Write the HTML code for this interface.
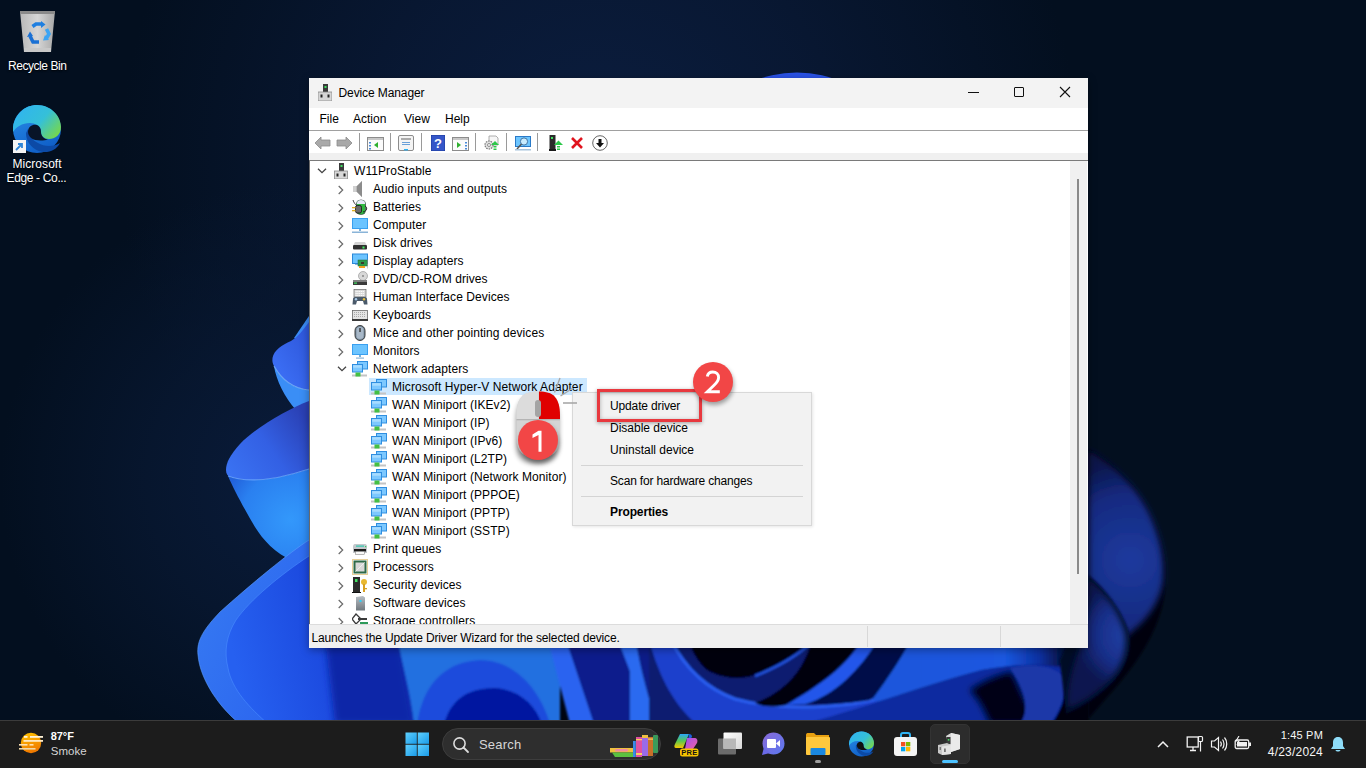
<!DOCTYPE html>
<html><head><meta charset="utf-8">
<style>
*{margin:0;padding:0;box-sizing:border-box}
html,body{width:1366px;height:768px;overflow:hidden}
body{position:relative;font-family:"Liberation Sans",sans-serif;font-size:12px;color:#000;background:#030f22}
.a{position:absolute}
.t{position:absolute;white-space:nowrap;line-height:1}
#wall{position:absolute;left:0;top:0}
</style></head>
<body>

<svg id="wall" width="1366" height="768" viewBox="0 0 1366 768">
<defs>
<radialGradient id="glA" cx="600" cy="160" r="480" gradientUnits="userSpaceOnUse">
<stop offset="0" stop-color="#0b1e40" stop-opacity="1"/><stop offset="0.45" stop-color="#0a1a38" stop-opacity="0.8"/><stop offset="1" stop-color="#0a1a38" stop-opacity="0"/></radialGradient>
<radialGradient id="glB" cx="300" cy="480" r="300" gradientUnits="userSpaceOnUse">
<stop offset="0" stop-color="#0a1c3c" stop-opacity="1"/><stop offset="0.5" stop-color="#081832" stop-opacity="0.8"/><stop offset="1" stop-color="#081832" stop-opacity="0"/></radialGradient>
<linearGradient id="gC" x1="200" y1="600" x2="330" y2="660" gradientUnits="userSpaceOnUse">
<stop offset="0" stop-color="#3578f2"/><stop offset="1" stop-color="#2a62ee"/></linearGradient>
<linearGradient id="gCi" x1="230" y1="640" x2="400" y2="600" gradientUnits="userSpaceOnUse">
<stop offset="0" stop-color="#2660f0"/><stop offset="0.6" stop-color="#1a46dc"/><stop offset="1" stop-color="#0c2ab0"/></linearGradient>
<linearGradient id="gBf" x1="230" y1="475" x2="309" y2="420" gradientUnits="userSpaceOnUse">
<stop offset="0" stop-color="#3a72f2"/><stop offset="0.5" stop-color="#3360e4"/><stop offset="1" stop-color="#2a40b4"/></linearGradient>
<radialGradient id="gBc" cx="290" cy="520" r="70" gradientUnits="userSpaceOnUse">
<stop offset="0" stop-color="#3398fb"/><stop offset="0.7" stop-color="#2a80f0"/><stop offset="1" stop-color="#2262dc"/></radialGradient>
<linearGradient id="gAf" x1="275" y1="360" x2="309" y2="340" gradientUnits="userSpaceOnUse">
<stop offset="0" stop-color="#3a6cf2"/><stop offset="1" stop-color="#2f58dc"/></linearGradient>
<radialGradient id="gR" cx="1130" cy="560" r="100" gradientUnits="userSpaceOnUse">
<stop offset="0" stop-color="#1d3a9e"/><stop offset="0.65" stop-color="#152a80"/><stop offset="1" stop-color="#0a164a"/></radialGradient>
<radialGradient id="gRi" cx="1130" cy="635" r="55" gradientUnits="userSpaceOnUse"><stop offset="0" stop-color="#2242a8"/><stop offset="0.6" stop-color="#182e88"/><stop offset="1" stop-color="#0c1850"/></radialGradient>
<linearGradient id="gBR" x1="900" y1="0" x2="1075" y2="0" gradientUnits="userSpaceOnUse"><stop offset="0" stop-color="#1a56dc"/><stop offset="0.6" stop-color="#1a58e0"/><stop offset="0.8" stop-color="#0c30a0"/><stop offset="1" stop-color="#01040f"/></linearGradient>
<filter id="bl1" x="-10%" y="-10%" width="120%" height="120%"><feGaussianBlur stdDeviation="1"/></filter>
<filter id="bl3" x="-20%" y="-20%" width="140%" height="140%"><feGaussianBlur stdDeviation="3"/></filter>
</defs>
<rect width="1366" height="768" fill="#030f1f"/><rect width="1366" height="768" fill="url(#glA)"/><rect width="1366" height="768" fill="url(#glB)"/>
<!-- top arc -->
<ellipse cx="797" cy="107" rx="65" ry="34.4" fill="#2a52e6"/>
<!-- petal A -->
<path d="M309,316 L294,338 L309,346 Z" fill="#3a8af5"/>
<path d="M274,366 C276,380 285,398 296,410 C301,416 305,422 309,429 L309,390 C298,389 284,384 274,366 Z" fill="#3a8ef6"/>
<path d="M309,322 C303,330 298,337 291,341 C282,345 274,350 272.5,358 C272,362 273,364 274,366 C284,384 298,389 309,390 Z" fill="url(#gAf)"/>
<path d="M274,366 C284,384 298,389 309,390" fill="none" stroke="#7cb8ff" stroke-width="1.2" opacity="0.8"/>
<!-- petal B -->
<path d="M228,476 C234,490 245,510 255,527 C263,540 275,553 293,561 L309,561 L309,469 C282,478 250,484 230,477 Z" fill="url(#gBc)"/>
<path d="M309,401 C290,408 255,428 240,444 C230,455 226,463 226,470 C226,474 228,476 230,477 C250,484 282,478 309,469 Z" fill="url(#gBf)"/>
<path d="M228,476 C250,484 282,478 309,469" fill="none" stroke="#6aa8ff" stroke-width="1.2" opacity="0.8"/>
<!-- strip base (clipped to x<=1088) -->
<rect x="300" y="600" width="788" height="124" fill="#000512"/>
<!-- petal C -->
<path d="M309,540 C290,552 250,585 220,612 C205,628 196,640 198,655 C200,680 220,708 240,724 L420,724 L420,540 Z" fill="url(#gC)"/>
<path d="M309,556 C280,575 250,600 236,620 C226,636 224,652 228,668 C232,690 250,708 268,724 L420,724 L420,556 Z" fill="url(#gCi)"/>
<path d="M309,556 C280,575 250,600 236,620 C226,636 224,652 228,668 C232,690 250,708 268,724" fill="none" stroke="#4a8cff" stroke-width="1" opacity="0.6"/>
<path d="M309,540 C290,552 250,585 220,612 C205,628 196,640 198,655 C200,680 220,708 240,724" fill="none" stroke="#5a9cff" stroke-width="1" opacity="0.6"/>
<g filter="url(#bl1)">
<!-- dark blue 335-400 -->
<path d="M325,640 L400,640 L414,724 L335,724 Z" fill="#0a26a8" filter="url(#bl3)"/>
<!-- teal-ish light band -->
<path d="M398,640 L560,640 L560,724 L414,724 C410,690 402,665 398,640 Z" fill="#2470e0"/>
<!-- arcs -->
<path d="M417,724 C422,690 440,662 480,660 C515,660 540,690 550,724 Z" fill="#1d4cdc"/>
<path d="M444,724 C450,702 465,688 495,688 C520,690 535,705 542,724 Z" fill="#0614a0"/>
<!-- vertical-ish bands -->
<path d="M548,640 L570,640 L596,724 L570,724 Z" fill="#2a64f0"/>
<path d="M566,640 L622,640 L660,724 L594,724 Z" fill="#0a1c8c"/>
<path d="M618,640 L636,640 C640,670 650,700 656,724 L650,724 Z" fill="#2a68f0"/>
<path d="M630,640 L636,640 C640,670 650,700 656,724 L630,724 Z" fill="#2a6af0"/>
<path d="M636,640 L649,640 C655,670 672,700 696,724 L656,724 C650,700 640,670 636,640 Z" fill="#0c1e88"/>
<!-- region above B1 -->
<path d="M649,640 L1088,640 L1088,724 L649,724 Z" fill="#0a1a70"/>
<!-- B1 -->
<path d="M649,640 L671,640 C685,668 705,688 735,699 C760,706 800,710 852,704 L900,695 C870,705 840,714 806,724 L696,724 C675,705 660,680 649,640 Z" fill="#1c40cc"/>
<path d="M671,640 C685,668 705,688 735,699 C760,706 800,710 852,704 L900,695" fill="none" stroke="#2a5ef0" stroke-width="3"/>
<!-- K1 black -->
<path d="M689,640 L812,640 C800,652 780,665 760,673 C745,680 725,680 707,670 C698,662 692,652 689,640 Z" fill="#000208"/>
<path d="M755,676 C775,668 795,658 812,642" fill="none" stroke="#2452e0" stroke-width="2.5"/>
<!-- K2 -->
<path d="M812,640 L862,640 C850,660 830,680 786,705 C770,708 760,706 755,703 C790,690 805,665 812,640 Z" fill="#000510"/>
<!-- B5 -->
<path d="M862,640 L878,640 C860,670 835,695 806,704 L786,705 C830,680 850,660 862,640 Z" fill="#2456ea"/>
<!-- N1 -->
<path d="M878,640 L911,640 C900,660 890,675 880,690 L870,700 C850,703 830,705 806,704 C835,695 860,670 878,640 Z" fill="#000a48"/>
<!-- bright region -->
<path d="M911,640 L1088,640 L1088,668 C1040,662 1010,665 982,670 C950,678 915,690 880,701 L872,700 C890,675 900,660 911,640 Z" fill="url(#gBR)"/>
<!-- below diagonal -->
<path d="M806,724 C840,714 870,705 880,701 C915,690 950,678 982,670 C1010,665 1040,662 1062,668 L1088,668 L1088,724 Z" fill="#082aa0"/>
<path d="M970,690 C985,680 1000,674 1012,672 C1020,690 1030,710 1036,724 L990,724 C985,710 978,698 970,690 Z" fill="#000618" filter="url(#bl3)"/>
<!-- petal near 1000-1066 -->
<path d="M1010,668 C1035,663 1055,666 1064,677 C1068,690 1062,706 1050,724 L1020,724 C1030,710 1025,690 1010,668 Z" fill="#1a38a8"/>
<path d="M1062,668 L1088,664 L1088,724 L1052,724 C1064,705 1068,690 1064,676 Z" fill="#01040f"/>
</g>
<!-- right petal -->
<path d="M1088,449 C1110,460 1140,486 1153,518 C1163,540 1167,560 1166,580 C1165,605 1157,630 1139,657 C1124,680 1104,700 1084,724 L1088,724 Z" fill="#01040f" filter="url(#bl1)"/>
<path d="M1088,450 C1110,461 1139,487 1152,519 C1161,541 1165,561 1163,582 C1160,600 1150,616 1134,630 C1120,642 1104,652 1088,660 Z" fill="url(#gR)" filter="url(#bl3)"/>
<path d="M1088,575 C1105,589 1120,607 1128,629 C1133,646 1128,666 1112,683 C1100,695 1085,706 1066,714 L1060,660 L1088,600 Z" fill="#050a28" filter="url(#bl1)"/>
<path d="M1088,578 C1104,592 1117,608 1124,630 C1128,646 1124,664 1110,680 C1098,692 1084,702 1068,708 C1066,690 1072,668 1080,648 L1088,600 Z" fill="url(#gRi)" filter="url(#bl3)"/>
</svg>
<svg class="a" style="left:18px;top:8px" width="40" height="46" viewBox="0 0 40 46">
<defs><linearGradient id="rb" x1="0" y1="0" x2="1" y2="0"><stop offset="0" stop-color="#b8b8b8"/><stop offset="0.5" stop-color="#d6d6d6"/><stop offset="1" stop-color="#a8a8a8"/></linearGradient></defs>
<path d="M2,3 L37,3 L33,44 L6,44 Z" fill="url(#rb)"/>
<path d="M2,3 L37,3 L37,6 L2,6 Z" fill="#8a8a8a"/>
<path d="M6,40 L33,40 L33,44 L6,44 Z" fill="#c8c8c8"/>
<g stroke-linecap="butt" fill="none" stroke-width="3.6" transform="translate(1,4)">
<path d="M13.5,14.5 L17,12 L23,12" stroke="#1f7fe0"/>
<path d="M22,9 L26.5,12.5 L22,16 Z" fill="#1f7fe0" stroke="none"/>
<path d="M27.5,17 L30,22 L27,27" stroke="#3aa4f4"/>
<path d="M30,28 L24,28.5 L26,23 Z" fill="#3aa4f4" stroke="none"/>
<path d="M20,30 L14,30 L11,24" stroke="#1a70d4"/>
<path d="M8,25 L11,19.5 L14,24 Z" fill="#1a70d4" stroke="none"/>
</g></svg>
<div class="t" style="left:8px;top:59.64px;font-size:12px;color:#fff;font-weight:normal;text-shadow:0 1px 2px #000;letter-spacing:-0.45px">Recycle Bin</div>
<svg class="a" style="left:13px;top:104px" width="50" height="50" viewBox="0 0 50 50">
<defs>
<linearGradient id="eg1" x1="0" y1="0.2" x2="1" y2="0.8"><stop offset="0" stop-color="#30b4f0"/><stop offset="0.55" stop-color="#35c0d8"/><stop offset="1" stop-color="#78d848"/></linearGradient>
<linearGradient id="eg2" x1="0" y1="0" x2="0.5" y2="1"><stop offset="0" stop-color="#2a90ea"/><stop offset="1" stop-color="#1060c8"/></linearGradient>
</defs>
<circle cx="24" cy="25" r="24" fill="url(#eg2)"/>
<path d="M13,29 C13,41 24,49 34,48 C41,47 45,43 47,39 C41,43 31,43 25,39 C19,36 15,31 15,25 Z" fill="#0c4aa6"/>
<path d="M0,23 C2,10 12,1 24,1 C38,1 48,12 48,23 C48,31 42,35 36,35 C31,35 28,32 28,28 L28,26 C27,22 22,19 17,19 C9,19 3,23 0,28 Z" fill="url(#eg1)"/>
<path d="M15,28 C15,22 20,20 24,21 C28,23 28,27 28,28 C28,32 31,35 35,35.5 C30,37 22,37 18,34 C16,32 15,30 15,28 Z" fill="#081428"/>
<rect x="0" y="36" width="13" height="13" fill="#f4f4f4"/>
<path d="M3,46 L9,40 M5,40 L9,40 L9,44" stroke="#2f86d8" stroke-width="1.8" fill="none"/>
</svg>
<div class="t" style="left:12.5px;top:158.04px;font-size:12px;color:#fff;font-weight:normal;text-shadow:0 1px 2px #000;letter-spacing:0.05px">Microsoft</div>
<div class="t" style="left:6.5px;top:172.14px;font-size:12px;color:#fff;font-weight:normal;text-shadow:0 1px 2px #000;letter-spacing:-0.35px">Edge - Co...</div>
<div class="a" style="left:309px;top:78px;width:779px;height:570px;background:#fff;box-shadow:0 2px 8px rgba(0,0,0,.35)"></div>
<div class="a" style="left:309px;top:78px;width:779px;height:30px;background:#f3f3f3"></div>
<svg class="a" style="left:318px;top:84px" width="14" height="17" viewBox="0 0 14 17">
<rect x="5" y="0" width="5" height="8" fill="#3a3a3a"/><rect x="6.5" y="2" width="2" height="2" fill="#3fe060"/>
<rect x="0" y="8" width="14" height="9" fill="#d6d6d6" stroke="#8a8a8a" stroke-width="0.8"/>
<rect x="2.5" y="10.5" width="2" height="3" fill="#222"/><rect x="9.5" y="10.5" width="2" height="3" fill="#222"/></svg>
<div class="t" style="left:338.5px;top:86.84px;font-size:12px;color:#000;font-weight:normal;letter-spacing:-0.1px">Device Manager</div>
<div class="a" style="left:968px;top:92px;width:11px;height:1px;background:#111"></div>
<div class="a" style="left:1014px;top:87px;width:10px;height:10px;border:1px solid #111;border-radius:1px"></div>
<svg class="a" style="left:1059px;top:86px" width="12" height="12" viewBox="0 0 12 12"><path d="M1,1 L11,11 M11,1 L1,11" stroke="#111" stroke-width="1.1"/></svg>
<div class="a" style="left:309px;top:108px;width:779px;height:22px;background:#fff"></div>
<div class="a" style="left:309px;top:130px;width:779px;height:1px;background:#a0a0a0"></div>
<div class="t" style="left:319.5px;top:112.84px;font-size:12px;color:#000;font-weight:normal;">File</div>
<div class="t" style="left:353px;top:112.84px;font-size:12px;color:#000;font-weight:normal;">Action</div>
<div class="t" style="left:404px;top:112.84px;font-size:12px;color:#000;font-weight:normal;">View</div>
<div class="t" style="left:445px;top:112.84px;font-size:12px;color:#000;font-weight:normal;">Help</div>
<div class="a" style="left:309px;top:131px;width:779px;height:22px;background:#fff"></div>
<div class="a" style="left:309px;top:153px;width:779px;height:7px;background:#f0f0f0"></div>
<div class="a" style="left:309px;top:160px;width:779px;height:1px;background:#7a7a7a"></div>
<div class="a" style="left:359px;top:133px;width:1px;height:18px;background:#9a9a9a"></div>
<div class="a" style="left:390px;top:133px;width:1px;height:18px;background:#9a9a9a"></div>
<div class="a" style="left:421px;top:133px;width:1px;height:18px;background:#9a9a9a"></div>
<div class="a" style="left:475px;top:133px;width:1px;height:18px;background:#9a9a9a"></div>
<div class="a" style="left:506px;top:133px;width:1px;height:18px;background:#9a9a9a"></div>
<div class="a" style="left:537px;top:133px;width:1px;height:18px;background:#9a9a9a"></div>
<svg class="a" style="left:314px;top:136px" width="17" height="14" viewBox="0 0 17 14"><path d="M1,7 L7,1 L7,4 L16,4 L16,10 L7,10 L7,13 Z" fill="#a9a9a9" stroke="#8a8a8a" stroke-width="0.8"/></svg>
<svg class="a" style="left:336px;top:136px" width="17" height="14" viewBox="0 0 17 14"><path d="M16,7 L10,1 L10,4 L1,4 L1,10 L10,10 L10,13 Z" fill="#a9a9a9" stroke="#8a8a8a" stroke-width="0.8"/></svg>
<svg class="a" style="left:367px;top:137px" width="17" height="14" viewBox="0 0 17 14"><rect x="0.5" y="0.5" width="16" height="13" fill="#fbfbfb" stroke="#8c8c8c"/><rect x="1" y="1" width="15" height="2" fill="#c8c8c8"/><path d="M11,5 L11,11 L7,8 Z" fill="#2fb02f"/><rect x="2" y="5" width="2" height="1.5" fill="#4a8ad8"/><rect x="2" y="8" width="2" height="1.5" fill="#4a8ad8"/><rect x="2" y="11" width="2" height="1.5" fill="#4a8ad8"/></svg>
<svg class="a" style="left:398px;top:135px" width="16" height="16" viewBox="0 0 16 16"><rect x="0.5" y="0.5" width="15" height="15" rx="1.5" fill="#f4f4f4" stroke="#8c8c8c"/><rect x="3" y="3" width="10" height="2" fill="#aaa"/><rect x="4" y="7" width="8" height="1" fill="#6aa0d8"/><rect x="4" y="9" width="8" height="1" fill="#6aa0d8"/><rect x="6" y="14" width="4" height="1.5" fill="#30b0f0"/></svg>
<svg class="a" style="left:431px;top:135px" width="14" height="16" viewBox="0 0 14 16"><rect x="0" y="0" width="14" height="16" fill="#3556c8"/><rect x="0" y="0" width="14" height="16" fill="none" stroke="#1d3a9a"/><text x="7" y="13" font-size="13" font-family="Liberation Sans" font-weight="bold" fill="#fff" text-anchor="middle">?</text></svg>
<svg class="a" style="left:452px;top:137px" width="17" height="14" viewBox="0 0 17 14"><rect x="0.5" y="0.5" width="16" height="13" fill="#fbfbfb" stroke="#8c8c8c"/><rect x="1" y="1" width="15" height="2" fill="#c8c8c8"/><path d="M5,5 L5,11 L9,8 Z" fill="#2fb02f"/><rect x="13" y="5" width="2" height="1.5" fill="#4a8ad8"/><rect x="13" y="8" width="2" height="1.5" fill="#4a8ad8"/><rect x="13" y="11" width="2" height="1.5" fill="#4a8ad8"/></svg>
<svg class="a" style="left:484px;top:135px" width="16" height="16" viewBox="0 0 16 16"><path d="M5,1 L12,1 L14,3 L14,10 L5,10 Z" fill="#f6f6f6" stroke="#9a9a9a" stroke-width="0.8"/><circle cx="5" cy="10" r="4" fill="#e0e0e0" stroke="#777" stroke-width="1.2" stroke-dasharray="1.5 1"/><circle cx="5" cy="10" r="1.5" fill="#fff" stroke="#777" stroke-width="0.8"/><path d="M7,10 L11,6 L15,10 Z" fill="#2cc84a"/><rect x="9.5" y="11" width="3" height="1.5" fill="#2cc84a"/><rect x="9.5" y="13.5" width="3" height="1.5" fill="#2cc84a"/></svg>
<svg class="a" style="left:515px;top:136px" width="16" height="15" viewBox="0 0 16 15"><rect x="0.5" y="0.5" width="15" height="10" fill="#6ec6ff" stroke="#2a7ac8"/><circle cx="9" cy="5.5" r="3.6" fill="#c8ecff" stroke="#3a6a98" stroke-width="0.9"/><path d="M6.5,8 L2,13" stroke="#555" stroke-width="1.5"/><rect x="0" y="13" width="16" height="1.5" fill="#a8c4dc"/></svg>
<svg class="a" style="left:549px;top:135px" width="14" height="16" viewBox="0 0 14 16"><rect x="0.5" y="0" width="6" height="15" fill="#2a2a2a"/><rect x="2" y="2" width="2" height="2" fill="#3fe060"/><rect x="0" y="14" width="7" height="2" fill="#1a1a1a"/><path d="M5,10 L9.5,5.5 L14,10 Z" fill="#2cc84a"/><rect x="8" y="11" width="3" height="1.5" fill="#2cc84a"/><rect x="8" y="13.5" width="3" height="1.5" fill="#2cc84a"/></svg>
<svg class="a" style="left:570px;top:136px" width="14" height="14" viewBox="0 0 14 14"><path d="M2,2 L12,12 M12,2 L2,12" stroke="#e0141e" stroke-width="2.6"/></svg>
<svg class="a" style="left:592px;top:135px" width="16" height="16" viewBox="0 0 16 16"><circle cx="8" cy="8" r="7.3" fill="#fff" stroke="#555" stroke-width="0.9"/><path d="M8,12.5 L4,8 L6.5,8 L6.5,4 L9.5,4 L9.5,8 L12,8 Z" fill="#111"/></svg>
<div class="a" style="left:309px;top:161px;width:1px;height:463px;background:#6a6a6a"></div>
<div class="a" style="left:1070px;top:161px;width:17px;height:463px;background:#f0f0f0"></div>
<div class="a" style="left:1077px;top:179px;width:2px;height:395px;background:#8a8a8a"></div>
<div class="a" style="left:309px;top:624px;width:779px;height:24px;background:#f0f0f0;border-top:1px solid #dcdcdc"></div>
<div class="a" style="left:867px;top:626px;width:1px;height:21px;background:#d8d8d8"></div>
<div class="a" style="left:1000px;top:626px;width:1px;height:21px;background:#d8d8d8"></div>
<div class="t" style="left:311.5px;top:632.04px;font-size:12px;color:#000;font-weight:normal;letter-spacing:-0.15px">Launches the Update Driver Wizard for the selected device.</div>
<div class="a" style="left:310px;top:161px;width:760px;height:463px;overflow:hidden">
<svg class="a" style="left:7px;top:7px" width="10" height="6" viewBox="0 0 10 6"><path d="M1,0.7 L5,4.7 L9,0.7" fill="none" stroke="#444" stroke-width="1.3"/></svg>
<svg class="a" style="left:24px;top:2px" width="16" height="16" viewBox="0 0 16 16"><rect x="5" y="0" width="5" height="8" fill="#3a3a3a"/><rect x="6.5" y="2" width="2" height="2" fill="#3fe060"/><rect x="0.5" y="8" width="13" height="8" fill="#d8d8d8" stroke="#8a8a8a" stroke-width="0.8"/><rect x="2.5" y="10.5" width="2" height="3" fill="#222"/><rect x="9.5" y="10.5" width="2" height="3" fill="#222"/></svg>
<div class="t" style="left:44px;top:3.84px;font-size:12px;color:#000;letter-spacing:0.08px">W11ProStable</div>
<svg class="a" style="left:28px;top:24px" width="6" height="10" viewBox="0 0 6 10"><path d="M0.7,1 L4.7,5 L0.7,9" fill="none" stroke="#6a6a6a" stroke-width="1.2"/></svg>
<svg class="a" style="left:42px;top:20px" width="16" height="16" viewBox="0 0 16 16"><path d="M1,5 L5,5 L10,0 L10,16 L5,11 L1,11 Z" fill="#b8b8b8"/><path d="M5,5 L10,0 L10,16 L5,11 Z" fill="#8c8c8c"/><rect x="1" y="5" width="3" height="6" fill="#d0d0d0"/></svg>
<div class="t" style="left:63px;top:21.84px;font-size:12px;color:#000;letter-spacing:0.08px">Audio inputs and outputs</div>
<svg class="a" style="left:28px;top:42px" width="6" height="10" viewBox="0 0 6 10"><path d="M0.7,1 L4.7,5 L0.7,9" fill="none" stroke="#6a6a6a" stroke-width="1.2"/></svg>
<svg class="a" style="left:42px;top:38px" width="16" height="16" viewBox="0 0 16 16"><rect x="4.5" y="1" width="9" height="14.5" rx="4" fill="#30b840" stroke="#2a2a3a" stroke-width="0.6"/><path d="M5,5 L13,5 L13,4 C13,1.8 11,1 9,1 C7,1 5,1.8 5,4 Z" fill="#e8e8f8"/><path d="M1,1 C2,4 3,5 5,7" stroke="#333" fill="none" stroke-width="0.9"/><path d="M13,7 C15.5,8 15.5,12 11,13" stroke="#222" fill="none" stroke-width="1"/><rect x="3.5" y="6.5" width="6" height="7.5" rx="1.8" fill="#6a6a6a" stroke="#111" stroke-width="0.8"/><rect x="0" y="8" width="3.5" height="1.3" fill="#e0b020"/><rect x="0" y="11" width="3.5" height="1.3" fill="#e0b020"/></svg>
<div class="t" style="left:63px;top:39.84px;font-size:12px;color:#000;letter-spacing:0.08px">Batteries</div>
<svg class="a" style="left:28px;top:60px" width="6" height="10" viewBox="0 0 6 10"><path d="M0.7,1 L4.7,5 L0.7,9" fill="none" stroke="#6a6a6a" stroke-width="1.2"/></svg>
<svg class="a" style="left:42px;top:56px" width="16" height="16" viewBox="0 0 16 16"><rect x="0" y="1" width="16" height="11" fill="#3aa0f0"/><rect x="1" y="2" width="14" height="9" fill="#6cc4ff"/><rect x="7" y="12" width="2" height="2" fill="#7ab0d8"/><rect x="0" y="14.5" width="16" height="1.5" fill="#8ab4d8"/></svg>
<div class="t" style="left:63px;top:57.84px;font-size:12px;color:#000;letter-spacing:0.08px">Computer</div>
<svg class="a" style="left:28px;top:78px" width="6" height="10" viewBox="0 0 6 10"><path d="M0.7,1 L4.7,5 L0.7,9" fill="none" stroke="#6a6a6a" stroke-width="1.2"/></svg>
<svg class="a" style="left:42px;top:74px" width="16" height="16" viewBox="0 0 16 16"><path d="M1.5,10 L3,7 L13,7 L14.5,10 Z" fill="#d4d4d4"/><rect x="1" y="10" width="14" height="4.5" rx="1" fill="#303030"/><rect x="10.5" y="11.5" width="2" height="2" fill="#40f060"/></svg>
<div class="t" style="left:63px;top:75.84px;font-size:12px;color:#000;letter-spacing:0.08px">Disk drives</div>
<svg class="a" style="left:28px;top:96px" width="6" height="10" viewBox="0 0 6 10"><path d="M0.7,1 L4.7,5 L0.7,9" fill="none" stroke="#6a6a6a" stroke-width="1.2"/></svg>
<svg class="a" style="left:42px;top:92px" width="16" height="16" viewBox="0 0 16 16"><rect x="0" y="0.5" width="16" height="10.5" fill="#2a88d8"/><rect x="1" y="1.5" width="14" height="8.5" fill="#6cc4ff"/><rect x="3" y="11" width="5" height="1" fill="#8ab4d8"/><rect x="6" y="7" width="9.5" height="6" fill="#2e9a4a" stroke="#1e6a3a" stroke-width="0.5"/><rect x="9" y="9" width="3" height="2" fill="#3a3a2a"/><rect x="7" y="13" width="6" height="2" fill="#f0a020"/><rect x="15.5" y="6.5" width="0.8" height="9" fill="#999"/></svg>
<div class="t" style="left:63px;top:93.84px;font-size:12px;color:#000;letter-spacing:0.08px">Display adapters</div>
<svg class="a" style="left:28px;top:114px" width="6" height="10" viewBox="0 0 6 10"><path d="M0.7,1 L4.7,5 L0.7,9" fill="none" stroke="#6a6a6a" stroke-width="1.2"/></svg>
<svg class="a" style="left:42px;top:110px" width="16" height="16" viewBox="0 0 16 16"><circle cx="11" cy="5" r="4.5" fill="#d8d8d8" stroke="#9a9a9a" stroke-width="0.7"/><circle cx="11" cy="5" r="1" fill="#888"/><rect x="1" y="9" width="14" height="5" fill="#3a3a3a"/><rect x="1" y="9" width="14" height="2" fill="#808080"/><rect x="2" y="11.5" width="3" height="1.2" fill="#40e060"/></svg>
<div class="t" style="left:63px;top:111.84px;font-size:12px;color:#000;letter-spacing:0.08px">DVD/CD-ROM drives</div>
<svg class="a" style="left:28px;top:132px" width="6" height="10" viewBox="0 0 6 10"><path d="M0.7,1 L4.7,5 L0.7,9" fill="none" stroke="#6a6a6a" stroke-width="1.2"/></svg>
<svg class="a" style="left:42px;top:128px" width="16" height="16" viewBox="0 0 16 16"><rect x="2" y="0.5" width="12" height="7.5" fill="#d8d8d8" stroke="#6a6a6a" stroke-width="0.7"/><path d="M3.5,2.5 H12.5 M3.5,4.5 H12.5 M3.5,6.5 H12.5" stroke="#fff" stroke-width="0.9" stroke-dasharray="1.2 0.6"/><path d="M0.5,15.5 L1,10 C1,8.5 2,8 4,8 L12,8 C14,8 15,8.5 15,10 L15.5,15.5 L12,15.5 L11,12 L5,12 L4,15.5 Z" fill="#4a5a6a"/><circle cx="4" cy="10.3" r="1.2" fill="#a8c8e8"/><circle cx="12" cy="10.3" r="1.2" fill="#e8c040"/></svg>
<div class="t" style="left:63px;top:129.84px;font-size:12px;color:#000;letter-spacing:0.08px">Human Interface Devices</div>
<svg class="a" style="left:28px;top:150px" width="6" height="10" viewBox="0 0 6 10"><path d="M0.7,1 L4.7,5 L0.7,9" fill="none" stroke="#6a6a6a" stroke-width="1.2"/></svg>
<svg class="a" style="left:42px;top:146px" width="16" height="16" viewBox="0 0 16 16"><rect x="0.5" y="3.5" width="15" height="9" fill="#e4e4e4" stroke="#6a6a6a" stroke-width="0.8"/><path d="M2,5.5 H14 M2,7.5 H14 M2,9.5 H14" stroke="#9a9a9a" stroke-width="0.8" stroke-dasharray="1 1"/><rect x="0" y="12" width="16" height="2" fill="#3a3a3a"/></svg>
<div class="t" style="left:63px;top:147.84px;font-size:12px;color:#000;letter-spacing:0.08px">Keyboards</div>
<svg class="a" style="left:28px;top:168px" width="6" height="10" viewBox="0 0 6 10"><path d="M0.7,1 L4.7,5 L0.7,9" fill="none" stroke="#6a6a6a" stroke-width="1.2"/></svg>
<svg class="a" style="left:42px;top:164px" width="16" height="16" viewBox="0 0 16 16"><rect x="3" y="0.5" width="10" height="15" rx="5" fill="#7a8ea0" stroke="#2a2a2a" stroke-width="0.9"/><rect x="4.5" y="2" width="7" height="12" rx="3.5" fill="#a8b8c8"/><rect x="7.3" y="3" width="1.4" height="4" fill="#333"/></svg>
<div class="t" style="left:63px;top:165.84px;font-size:12px;color:#000;letter-spacing:0.08px">Mice and other pointing devices</div>
<svg class="a" style="left:28px;top:186px" width="6" height="10" viewBox="0 0 6 10"><path d="M0.7,1 L4.7,5 L0.7,9" fill="none" stroke="#6a6a6a" stroke-width="1.2"/></svg>
<svg class="a" style="left:42px;top:182px" width="16" height="16" viewBox="0 0 16 16"><rect x="0" y="1" width="16" height="11" fill="#3aa0f0"/><rect x="1" y="2" width="14" height="9" fill="#6cc4ff"/><rect x="7" y="12" width="2" height="2" fill="#7ab0d8"/><rect x="4" y="14.5" width="8" height="1.2" fill="#8ab4d8"/></svg>
<div class="t" style="left:63px;top:183.84px;font-size:12px;color:#000;letter-spacing:0.08px">Monitors</div>
<svg class="a" style="left:27px;top:205px" width="10" height="6" viewBox="0 0 10 6"><path d="M1,0.7 L5,4.7 L9,0.7" fill="none" stroke="#444" stroke-width="1.3"/></svg>
<svg class="a" style="left:42px;top:200px" width="16" height="16" viewBox="0 0 16 16"><rect x="5.5" y="0.5" width="10" height="7.5" fill="#7cc8ff" stroke="#2f8ee0" stroke-width="1"/><rect x="0.5" y="3.5" width="10" height="7.5" fill="#7cc8ff" stroke="#2f8ee0" stroke-width="1"/><rect x="1.2" y="4.2" width="8.6" height="2.5" fill="#a8dcff"/><rect x="0" y="13.5" width="15" height="2" fill="#c4c4c4"/><rect x="3.5" y="11.5" width="5" height="4" fill="#44c044"/></svg>
<div class="t" style="left:63px;top:201.84px;font-size:12px;color:#000;letter-spacing:0.08px">Network adapters</div>
<div class="a" style="left:59px;top:217px;width:218px;height:17px;background:#cce8ff"></div>
<svg class="a" style="left:61px;top:218px" width="16" height="16" viewBox="0 0 16 16"><rect x="5.5" y="0.5" width="10" height="7.5" fill="#7cc8ff" stroke="#2f8ee0" stroke-width="1"/><rect x="0.5" y="3.5" width="10" height="7.5" fill="#7cc8ff" stroke="#2f8ee0" stroke-width="1"/><rect x="1.2" y="4.2" width="8.6" height="2.5" fill="#a8dcff"/><rect x="0" y="13.5" width="15" height="2" fill="#c4c4c4"/><rect x="3.5" y="11.5" width="5" height="4" fill="#44c044"/></svg>
<div class="t" style="left:82px;top:219.84px;font-size:12px;color:#000;letter-spacing:0.08px">Microsoft Hyper-V Network Adapter</div>
<svg class="a" style="left:61px;top:236px" width="16" height="16" viewBox="0 0 16 16"><rect x="5.5" y="0.5" width="10" height="7.5" fill="#7cc8ff" stroke="#2f8ee0" stroke-width="1"/><rect x="0.5" y="3.5" width="10" height="7.5" fill="#7cc8ff" stroke="#2f8ee0" stroke-width="1"/><rect x="1.2" y="4.2" width="8.6" height="2.5" fill="#a8dcff"/><rect x="0" y="13.5" width="15" height="2" fill="#c4c4c4"/><rect x="3.5" y="11.5" width="5" height="4" fill="#44c044"/></svg>
<div class="t" style="left:82px;top:237.84px;font-size:12px;color:#000;letter-spacing:0.08px">WAN Miniport (IKEv2)</div>
<svg class="a" style="left:61px;top:254px" width="16" height="16" viewBox="0 0 16 16"><rect x="5.5" y="0.5" width="10" height="7.5" fill="#7cc8ff" stroke="#2f8ee0" stroke-width="1"/><rect x="0.5" y="3.5" width="10" height="7.5" fill="#7cc8ff" stroke="#2f8ee0" stroke-width="1"/><rect x="1.2" y="4.2" width="8.6" height="2.5" fill="#a8dcff"/><rect x="0" y="13.5" width="15" height="2" fill="#c4c4c4"/><rect x="3.5" y="11.5" width="5" height="4" fill="#44c044"/></svg>
<div class="t" style="left:82px;top:255.84px;font-size:12px;color:#000;letter-spacing:0.08px">WAN Miniport (IP)</div>
<svg class="a" style="left:61px;top:272px" width="16" height="16" viewBox="0 0 16 16"><rect x="5.5" y="0.5" width="10" height="7.5" fill="#7cc8ff" stroke="#2f8ee0" stroke-width="1"/><rect x="0.5" y="3.5" width="10" height="7.5" fill="#7cc8ff" stroke="#2f8ee0" stroke-width="1"/><rect x="1.2" y="4.2" width="8.6" height="2.5" fill="#a8dcff"/><rect x="0" y="13.5" width="15" height="2" fill="#c4c4c4"/><rect x="3.5" y="11.5" width="5" height="4" fill="#44c044"/></svg>
<div class="t" style="left:82px;top:273.84px;font-size:12px;color:#000;letter-spacing:0.08px">WAN Miniport (IPv6)</div>
<svg class="a" style="left:61px;top:290px" width="16" height="16" viewBox="0 0 16 16"><rect x="5.5" y="0.5" width="10" height="7.5" fill="#7cc8ff" stroke="#2f8ee0" stroke-width="1"/><rect x="0.5" y="3.5" width="10" height="7.5" fill="#7cc8ff" stroke="#2f8ee0" stroke-width="1"/><rect x="1.2" y="4.2" width="8.6" height="2.5" fill="#a8dcff"/><rect x="0" y="13.5" width="15" height="2" fill="#c4c4c4"/><rect x="3.5" y="11.5" width="5" height="4" fill="#44c044"/></svg>
<div class="t" style="left:82px;top:291.84px;font-size:12px;color:#000;letter-spacing:0.08px">WAN Miniport (L2TP)</div>
<svg class="a" style="left:61px;top:308px" width="16" height="16" viewBox="0 0 16 16"><rect x="5.5" y="0.5" width="10" height="7.5" fill="#7cc8ff" stroke="#2f8ee0" stroke-width="1"/><rect x="0.5" y="3.5" width="10" height="7.5" fill="#7cc8ff" stroke="#2f8ee0" stroke-width="1"/><rect x="1.2" y="4.2" width="8.6" height="2.5" fill="#a8dcff"/><rect x="0" y="13.5" width="15" height="2" fill="#c4c4c4"/><rect x="3.5" y="11.5" width="5" height="4" fill="#44c044"/></svg>
<div class="t" style="left:82px;top:309.84px;font-size:12px;color:#000;letter-spacing:0.08px">WAN Miniport (Network Monitor)</div>
<svg class="a" style="left:61px;top:326px" width="16" height="16" viewBox="0 0 16 16"><rect x="5.5" y="0.5" width="10" height="7.5" fill="#7cc8ff" stroke="#2f8ee0" stroke-width="1"/><rect x="0.5" y="3.5" width="10" height="7.5" fill="#7cc8ff" stroke="#2f8ee0" stroke-width="1"/><rect x="1.2" y="4.2" width="8.6" height="2.5" fill="#a8dcff"/><rect x="0" y="13.5" width="15" height="2" fill="#c4c4c4"/><rect x="3.5" y="11.5" width="5" height="4" fill="#44c044"/></svg>
<div class="t" style="left:82px;top:327.84px;font-size:12px;color:#000;letter-spacing:0.08px">WAN Miniport (PPPOE)</div>
<svg class="a" style="left:61px;top:344px" width="16" height="16" viewBox="0 0 16 16"><rect x="5.5" y="0.5" width="10" height="7.5" fill="#7cc8ff" stroke="#2f8ee0" stroke-width="1"/><rect x="0.5" y="3.5" width="10" height="7.5" fill="#7cc8ff" stroke="#2f8ee0" stroke-width="1"/><rect x="1.2" y="4.2" width="8.6" height="2.5" fill="#a8dcff"/><rect x="0" y="13.5" width="15" height="2" fill="#c4c4c4"/><rect x="3.5" y="11.5" width="5" height="4" fill="#44c044"/></svg>
<div class="t" style="left:82px;top:345.84px;font-size:12px;color:#000;letter-spacing:0.08px">WAN Miniport (PPTP)</div>
<svg class="a" style="left:61px;top:362px" width="16" height="16" viewBox="0 0 16 16"><rect x="5.5" y="0.5" width="10" height="7.5" fill="#7cc8ff" stroke="#2f8ee0" stroke-width="1"/><rect x="0.5" y="3.5" width="10" height="7.5" fill="#7cc8ff" stroke="#2f8ee0" stroke-width="1"/><rect x="1.2" y="4.2" width="8.6" height="2.5" fill="#a8dcff"/><rect x="0" y="13.5" width="15" height="2" fill="#c4c4c4"/><rect x="3.5" y="11.5" width="5" height="4" fill="#44c044"/></svg>
<div class="t" style="left:82px;top:363.84px;font-size:12px;color:#000;letter-spacing:0.08px">WAN Miniport (SSTP)</div>
<svg class="a" style="left:28px;top:384px" width="6" height="10" viewBox="0 0 6 10"><path d="M0.7,1 L4.7,5 L0.7,9" fill="none" stroke="#6a6a6a" stroke-width="1.2"/></svg>
<svg class="a" style="left:42px;top:380px" width="16" height="16" viewBox="0 0 16 16"><path d="M1,6 C1,3.5 2,3 4,3 L12,3 C14,3 15,3.5 15,6 L15,12 L1,12 Z" fill="#c4c8cc"/><rect x="4" y="4.5" width="8" height="1.2" fill="#30c8b0"/><rect x="13" y="5" width="1.2" height="1.2" fill="#30d060"/><rect x="2" y="8" width="12" height="2.5" fill="#1a1a1a"/><rect x="3.5" y="10.5" width="9" height="3" fill="#f8f8f8" stroke="#777" stroke-width="0.5"/></svg>
<div class="t" style="left:63px;top:381.84px;font-size:12px;color:#000;letter-spacing:0.08px">Print queues</div>
<svg class="a" style="left:28px;top:402px" width="6" height="10" viewBox="0 0 6 10"><path d="M0.7,1 L4.7,5 L0.7,9" fill="none" stroke="#6a6a6a" stroke-width="1.2"/></svg>
<svg class="a" style="left:42px;top:398px" width="16" height="16" viewBox="0 0 16 16"><rect x="0.5" y="0.5" width="15" height="15" fill="none" stroke="#d0a030" stroke-width="1" stroke-dasharray="1 1"/><rect x="1.5" y="1.5" width="13" height="13" fill="#2e6a48"/><rect x="3.5" y="3.5" width="9" height="9" fill="#d8d8d8"/><path d="M3.5,12.5 L12.5,3.5" stroke="#eee" stroke-width="1"/></svg>
<div class="t" style="left:63px;top:399.84px;font-size:12px;color:#000;letter-spacing:0.08px">Processors</div>
<svg class="a" style="left:28px;top:420px" width="6" height="10" viewBox="0 0 6 10"><path d="M0.7,1 L4.7,5 L0.7,9" fill="none" stroke="#6a6a6a" stroke-width="1.2"/></svg>
<svg class="a" style="left:42px;top:416px" width="16" height="16" viewBox="0 0 16 16"><rect x="1" y="0" width="7" height="15" fill="#2a2a2a"/><rect x="3" y="2" width="2.5" height="3" fill="#40e060"/><rect x="0" y="15" width="9" height="1" fill="#111"/><circle cx="12" cy="5" r="3" fill="#e8b830"/><rect x="11" y="7" width="2" height="8" fill="#d8a020"/><rect x="13" y="11" width="2" height="1.3" fill="#d8a020"/></svg>
<div class="t" style="left:63px;top:417.84px;font-size:12px;color:#000;letter-spacing:0.08px">Security devices</div>
<svg class="a" style="left:28px;top:438px" width="6" height="10" viewBox="0 0 6 10"><path d="M0.7,1 L4.7,5 L0.7,9" fill="none" stroke="#6a6a6a" stroke-width="1.2"/></svg>
<svg class="a" style="left:42px;top:434px" width="16" height="16" viewBox="0 0 16 16"><defs><linearGradient id="sfg" x1="0" y1="0" x2="0" y2="1"><stop offset="0" stop-color="#b8bec4"/><stop offset="1" stop-color="#70787e"/></linearGradient></defs><path d="M4,2 L11,1 L13,2.5 L13,15.5 L4,15.5 Z" fill="url(#sfg)"/><rect x="7.5" y="5" width="2" height="2" fill="#30d0f8"/></svg>
<div class="t" style="left:63px;top:435.84px;font-size:12px;color:#000;letter-spacing:0.08px">Software devices</div>
<svg class="a" style="left:28px;top:456px" width="6" height="10" viewBox="0 0 6 10"><path d="M0.7,1 L4.7,5 L0.7,9" fill="none" stroke="#6a6a6a" stroke-width="1.2"/></svg>
<svg class="a" style="left:42px;top:452px" width="16" height="16" viewBox="0 0 16 16"><path d="M4,1 L9,6 L4,11 L0,6 Z" fill="none" stroke="#3a3a3a" stroke-width="1.3"/><rect x="6" y="5" width="9" height="2" fill="#3a3a3a"/><rect x="8" y="9" width="8" height="5" fill="#2e9a5a"/></svg>
<div class="t" style="left:63px;top:453.84px;font-size:12px;color:#000;letter-spacing:0.08px">Storage controllers</div>
</div>
<div class="a" style="left:572px;top:392px;width:240px;height:134px;background:#f2f2f2;border:1px solid #d8d8d8;box-shadow:1px 1px 3px rgba(0,0,0,.10)"></div>
<div class="a" style="left:581px;top:465px;width:222px;height:1px;background:#d4d4d4"></div>
<div class="a" style="left:581px;top:496px;width:222px;height:1px;background:#d4d4d4"></div>
<div class="t" style="left:610px;top:400.04px;font-size:12px;color:#000;font-weight:normal;letter-spacing:-0.14px">Update driver</div>
<div class="t" style="left:610px;top:421.94px;font-size:12px;color:#000;font-weight:normal;">Disable device</div>
<div class="t" style="left:610px;top:444.04px;font-size:12px;color:#000;font-weight:normal;">Uninstall device</div>
<div class="t" style="left:610px;top:475.44px;font-size:12px;color:#000;font-weight:normal;letter-spacing:-0.18px">Scan for hardware changes</div>
<div class="t" style="left:610px;top:506.44px;font-size:12px;color:#000;font-weight:bold;letter-spacing:-0.12px">Properties</div>
<div class="a" style="left:597px;top:389px;width:105px;height:33px;border:3px solid #e8383e;box-shadow:0 1px 4px rgba(0,0,0,.35), inset 0 1px 4px rgba(0,0,0,.30)"></div>
<div class="a" style="left:693px;top:362px;width:40px;height:40px;border-radius:50%;background:#f24646;box-shadow:1px 3px 4px rgba(0,0,0,.35)"></div>
<svg class="a" style="left:700px;top:366px" width="26" height="32" viewBox="0 0 26 32"><path d="M7.3,10.5 C7.8,7.5 10,6 12.8,6 C16.3,6 18.6,8.3 18.6,11.5 C18.6,14.3 17,16.5 13.8,19.5 L7.3,25.8 L19.8,25.8" fill="none" stroke="#fff" stroke-width="2.9" stroke-linejoin="miter"/></svg>
<svg class="a" style="left:510px;top:370px" width="70" height="100" viewBox="0 0 70 100">
<defs><filter id="msh" x="-30%" y="-30%" width="160%" height="160%"><feGaussianBlur stdDeviation="2.4"/></filter></defs>
<g transform="translate(0,18)">
<path d="M7,30 C7,10 14,4 28,4 C42,4 50,10 50,30 L50,52 C50,66 42,72 28,72 C14,72 7,66 7,52 Z" fill="#000" opacity="0.4" filter="url(#msh)" transform="translate(-1,4)"/>
<path d="M6.5,28 C6.5,9 13,3.5 28,3.5 C43,3.5 50,9 50,28 L50,50 C50,64 42,70 28,70 C14,70 6.5,64 6.5,50 Z" fill="#d4d4d4"/>
<path d="M6.5,28 C6.5,9 13,3.5 28,3.5 L28,31 L6.5,31 Z" fill="#dcdcdc"/>
<path d="M29,3.5 C43,3.5 50,9 50,28 L50,31 L29,31 Z" fill="#e00000"/>
<rect x="25" y="12" width="6" height="17" rx="3" fill="#a4a4a4"/>
<rect x="6.5" y="31" width="43.5" height="1.3" fill="#b4b4b4"/>
</g>
<path d="M50.5,26 L63,18" stroke="#a8a8a8" stroke-width="1.4"/>
<path d="M50,8 L44.5,22.5" stroke="#a8a8a8" stroke-width="1.4"/>
<path d="M53,33 L67,33" stroke="#a8a8a8" stroke-width="1.6"/>
</svg>
<div class="a" style="left:518px;top:420px;width:40px;height:40px;border-radius:50%;background:#f24646;box-shadow:1px 3px 4px rgba(0,0,0,.35)"></div>
<svg class="a" style="left:528px;top:428px" width="18" height="26" viewBox="0 0 18 26"><path d="M4.5,6.5 L10.5,2.8 L13.5,2.8 L13.5,23.7 L10.5,23.7 L10.5,7 L4.5,10 Z" fill="#fff"/></svg>
<div class="a" style="left:0px;top:720px;width:1366px;height:48px;background:#1c1c1c"></div>
<div class="a" style="left:0px;top:720px;width:1366px;height:1px;background:#3b3b3b"></div>
<svg class="a" style="left:14px;top:731px" width="36" height="26" viewBox="0 0 36 26">
<defs><linearGradient id="sun" x1="0" y1="0" x2="0.3" y2="1"><stop offset="0" stop-color="#ffc400"/><stop offset="1" stop-color="#f07a00"/></linearGradient></defs>
<circle cx="17" cy="12" r="10.2" fill="url(#sun)"/>
<rect x="16" y="5" width="13" height="1.8" fill="#fff3d8"/>
<rect x="10" y="5" width="3.5" height="1.8" fill="#fff3d8"/>
<rect x="9.5" y="9" width="19.5" height="1.8" fill="#ffe8c0"/>
<rect x="5" y="13" width="8.5" height="1.6" fill="#ffe0b0"/>
<rect x="15.5" y="13" width="4" height="1.6" fill="#ffe0b0"/>
<rect x="5" y="17" width="16.5" height="1.6" fill="#f0d8a8"/>
</svg>
<div class="t" style="left:50.8px;top:730.69px;font-size:11px;color:#fff;font-weight:bold;letter-spacing:-0.1px">87°F</div>
<div class="t" style="left:50.8px;top:746.07px;font-size:11.5px;color:#d4d4d4;font-weight:normal;letter-spacing:0px">Smoke</div>
<svg class="a" style="left:405px;top:732px" width="25" height="25" viewBox="0 0 25 25">
<defs><linearGradient id="wl" x1="0" y1="0" x2="1" y2="1"><stop offset="0" stop-color="#5fd0ff"/><stop offset="1" stop-color="#1a9be8"/></linearGradient></defs>
<rect x="0.5" y="0.5" width="11.3" height="11.3" fill="url(#wl)"/><rect x="12.7" y="0.5" width="11.3" height="11.3" fill="url(#wl)"/>
<rect x="0.5" y="12.7" width="11.3" height="11.3" fill="url(#wl)"/><rect x="12.7" y="12.7" width="11.3" height="11.3" fill="url(#wl)"/></svg>
<div class="a" style="left:442px;top:728px;width:219px;height:32px;background:#2e2e2e;border:1px solid #3d3d3d;border-radius:16px"></div>
<svg class="a" style="left:452px;top:736px" width="18" height="18" viewBox="0 0 18 18"><circle cx="7.5" cy="7.5" r="5.6" fill="none" stroke="#dcdcdc" stroke-width="1.6"/><path d="M11.5,11.5 L16,16" stroke="#dcdcdc" stroke-width="1.8" stroke-linecap="round"/></svg>
<div class="t" style="left:479px;top:737.60px;font-size:13px;color:#d6d6d6;font-weight:normal;letter-spacing:0.2px">Search</div>
<svg class="a" style="left:609px;top:734px" width="50" height="24" viewBox="0 0 50 24">
<rect x="1" y="14" width="23" height="4.5" fill="#f0c040"/><rect x="6" y="15" width="13" height="2.5" rx="1.2" fill="#f08aa0"/>
<path d="M3,18.5 L24,18.5 L24,23 L6,23 Z" fill="#5cc040"/>
<rect x="24" y="7" width="2.8" height="16" fill="#3a8ae8"/>
<rect x="27" y="3" width="6" height="20" fill="#e050a0"/><rect x="27" y="5" width="6" height="1.3" fill="#f8d060"/><rect x="27" y="19" width="6" height="2" fill="#f8d060"/>
<rect x="33" y="1" width="6" height="21" fill="#9a6ae8"/><rect x="33" y="1" width="6" height="3" fill="#f0c040"/>
<rect x="39" y="3" width="5" height="19" fill="#c8702a"/><rect x="39" y="4.5" width="5" height="1.2" fill="#f8d060"/>
<rect x="44" y="1" width="5" height="18" rx="1" fill="#3a9a5a"/></svg>
<svg class="a" style="left:674px;top:733px" width="25" height="24" viewBox="0 0 25 24">
<defs><linearGradient id="cp1" x1="0" y1="0" x2="0" y2="1"><stop offset="0" stop-color="#2aa8f8"/><stop offset="0.5" stop-color="#5ac850"/><stop offset="1" stop-color="#f8c800"/></linearGradient>
<linearGradient id="cp2" x1="0" y1="0" x2="1" y2="1"><stop offset="0" stop-color="#a050f0"/><stop offset="1" stop-color="#f060a0"/></linearGradient></defs>
<path d="M6,1 L15,1 L9,15 L2,15 C0,15 0,13 1,11 Z" fill="url(#cp1)"/>
<path d="M15,1 C17,1 18,2 18,4 L14,8 Z" fill="#1a60e0"/>
<path d="M13,5 L20,5 C23,5 24,7 23,10 L19,16 L11,16 Z" fill="url(#cp2)"/>
<rect x="6" y="15.5" width="18.5" height="8" rx="2.5" fill="#f8c400"/>
<text x="15.3" y="22.3" font-size="7.5" font-weight="bold" font-family="Liberation Sans" fill="#111" text-anchor="middle" letter-spacing="0.3">PRE</text></svg>
<svg class="a" style="left:717px;top:732px" width="26" height="24" viewBox="0 0 26 24">
<defs><linearGradient id="tv" x1="0" y1="0" x2="1" y2="1"><stop offset="0" stop-color="#ffffff"/><stop offset="1" stop-color="#d8d8d8"/></linearGradient></defs>
<rect x="1" y="6.5" width="18" height="16" rx="1" fill="#6c6c6c"/>
<rect x="6.5" y="0.5" width="18.5" height="16.5" rx="1" fill="url(#tv)"/>
<rect x="6.5" y="6.5" width="12.5" height="10.5" fill="#b8b8b8"/></svg>
<svg class="a" style="left:761px;top:732px" width="26" height="24" viewBox="0 0 26 24">
<defs><linearGradient id="mt" x1="0" y1="0" x2="1" y2="1"><stop offset="0" stop-color="#8a6ad8"/><stop offset="1" stop-color="#5a78f0"/></linearGradient></defs>
<circle cx="12.5" cy="11.5" r="11" fill="url(#mt)"/><path d="M1,23 L3,15 L9,21 Z" fill="#6a6ae8"/>
<rect x="6" y="7" width="9" height="9" rx="1" fill="#fff"/><path d="M15,11.5 L19,8 L19,15 Z" fill="#fff"/></svg>
<svg class="a" style="left:805px;top:732px" width="26" height="24" viewBox="0 0 26 24">
<path d="M1,3 C1,1.5 2,1 3,1 L9,1 L11,3 L24,3 L24,8 L1,8 Z" fill="#e8a010"/>
<rect x="1" y="5" width="24" height="18" rx="1" fill="#ffc83d"/>
<rect x="5.5" y="16" width="15" height="7" rx="1" fill="#1a88e0"/></svg>
<div class="a" style="left:815px;top:760px;width:6px;height:3px;background:#9e9e9e;border-radius:2px"></div>
<svg class="a" style="left:849px;top:731px" width="26" height="26" viewBox="0 0 26 26">
<defs>
<linearGradient id="te1" x1="0" y1="0.2" x2="1" y2="0.8"><stop offset="0" stop-color="#30b4f0"/><stop offset="0.55" stop-color="#35c0d8"/><stop offset="1" stop-color="#78d848"/></linearGradient>
<linearGradient id="te2" x1="0" y1="0" x2="0.5" y2="1"><stop offset="0" stop-color="#2a90ea"/><stop offset="1" stop-color="#1060c8"/></linearGradient>
</defs>
<g transform="scale(0.52)">
<circle cx="24" cy="25" r="24" fill="url(#te2)"/>
<path d="M13,29 C13,41 24,49 34,48 C41,47 45,43 47,39 C41,43 31,43 25,39 C19,36 15,31 15,25 Z" fill="#0c4aa6"/>
<path d="M0,23 C2,10 12,1 24,1 C38,1 48,12 48,23 C48,31 42,35 36,35 C31,35 28,32 28,28 L28,26 C27,22 22,19 17,19 C9,19 3,23 0,28 Z" fill="url(#te1)"/>
<path d="M15,28 C15,22 20,20 24,21 C28,23 28,27 28,28 C28,32 31,35 35,35.5 C30,37 22,37 18,34 C16,32 15,30 15,28 Z" fill="#101010"/>
</g></svg>
<svg class="a" style="left:893px;top:732px" width="25" height="25" viewBox="0 0 25 25">
<path d="M8,6 L8,3 C8,1.5 9,1 10,1 L15,1 C16,1 17,1.5 17,3 L17,6" fill="none" stroke="#30b4f4" stroke-width="2"/>
<rect x="1" y="5" width="23" height="19" rx="3" fill="#f4f4f4"/>
<rect x="8" y="10" width="4.3" height="4.3" fill="#f25022"/><rect x="13" y="10" width="4.3" height="4.3" fill="#7fba00"/>
<rect x="8" y="15" width="4.3" height="4.3" fill="#00a4ef"/><rect x="13" y="15" width="4.3" height="4.3" fill="#ffb900"/></svg>
<div class="a" style="left:930px;top:724px;width:40px;height:40px;background:#2c2c2c;border:1px solid #333;border-radius:5px"></div>
<svg class="a" style="left:938px;top:733px" width="24" height="22" viewBox="0 0 24 22">
<path d="M8,3 L13,0 L22,2 L22,16 L13,19 Z" fill="#d8d8d8"/>
<path d="M13,0 L22,2 L22,16 L13,19 Z" fill="#eaeaea"/>
<rect x="8.5" y="4" width="4" height="7" fill="#3a3a3a"/><rect x="9.8" y="6" width="1.6" height="1.6" fill="#40e060"/>
<path d="M0,12 L9,10 L13,12 L13,21 L4,22 L0,20 Z" fill="#c8c8c8"/>
<path d="M4,13.5 L13,12 L13,21 L4,22 Z" fill="#e4e4e4"/>
<rect x="1.5" y="14" width="1.5" height="3" fill="#777"/><rect x="6" y="15.5" width="1.8" height="3.5" fill="#777"/></svg>
<div class="a" style="left:942px;top:760px;width:16px;height:3px;background:#4cc2ff;border-radius:2px"></div>
<svg class="a" style="left:1156px;top:738px" width="14" height="11" viewBox="0 0 14 11"><path d="M2,9 L7,4 L12,9" fill="none" stroke="#f2f2f2" stroke-width="1.5"/></svg>
<svg class="a" style="left:1186px;top:735px" width="18" height="18" viewBox="0 0 18 18">
<rect x="1.2" y="2" width="11" height="10" fill="none" stroke="#f2f2f2" stroke-width="1.3"/>
<path d="M4,15.5 L10,15.5 M7,12 L7,15.5" stroke="#f2f2f2" stroke-width="1.3"/>
<rect x="12.5" y="1.5" width="4" height="5" rx="1" fill="none" stroke="#f2f2f2" stroke-width="1.2"/>
<path d="M14.5,6.5 L14.5,16.5" stroke="#f2f2f2" stroke-width="1.2"/></svg>
<svg class="a" style="left:1210px;top:736px" width="18" height="16" viewBox="0 0 18 16">
<path d="M1.5,5 L4.5,5 L8.5,1.5 L8.5,14.5 L4.5,11 L1.5,11 Z" fill="none" stroke="#f2f2f2" stroke-width="1.2"/>
<path d="M10.5,5.5 C11.5,7 11.5,9 10.5,10.5" fill="none" stroke="#f2f2f2" stroke-width="1.2"/>
<path d="M12.5,3.5 C14.5,6 14.5,10 12.5,12.5" fill="none" stroke="#f2f2f2" stroke-width="1.2"/>
<path d="M14.5,1.5 C17.5,5 17.5,11 14.5,14.5" fill="none" stroke="#f2f2f2" stroke-width="1.2"/></svg>
<svg class="a" style="left:1234px;top:736px" width="18" height="14" viewBox="0 0 18 14">
<rect x="1.2" y="4" width="13.5" height="8.5" rx="1.5" fill="none" stroke="#f2f2f2" stroke-width="1.3"/>
<rect x="15" y="6.5" width="2" height="3.5" fill="#f2f2f2"/>
<rect x="3" y="6" width="10" height="4.5" fill="#f2f2f2"/>
<path d="M5,0 L2,5 L5,5 L3,9" fill="none" stroke="#f2f2f2" stroke-width="1.1"/></svg>
<div class="t" style="left:1250px;top:730.4px;width:73px;text-align:right;font-size:11px;color:#f6f6f6;letter-spacing:0.2px">1:45 PM</div>
<div class="t" style="left:1250px;top:745.5px;width:73px;text-align:right;font-size:12px;color:#f6f6f6;letter-spacing:0.2px">4/23/2024</div>
<svg class="a" style="left:1330px;top:736px" width="16" height="17" viewBox="0 0 16 17">
<path d="M8,1 C4.5,1 3,3.5 3,6.5 L3,10 L1,13 L15,13 L13,10 L13,6.5 C13,3.5 11.5,1 8,1 Z" fill="#8edcf8"/>
<path d="M5.5,14 C6,16 10,16 10.5,14 Z" fill="#8edcf8"/></svg>
</body></html>
